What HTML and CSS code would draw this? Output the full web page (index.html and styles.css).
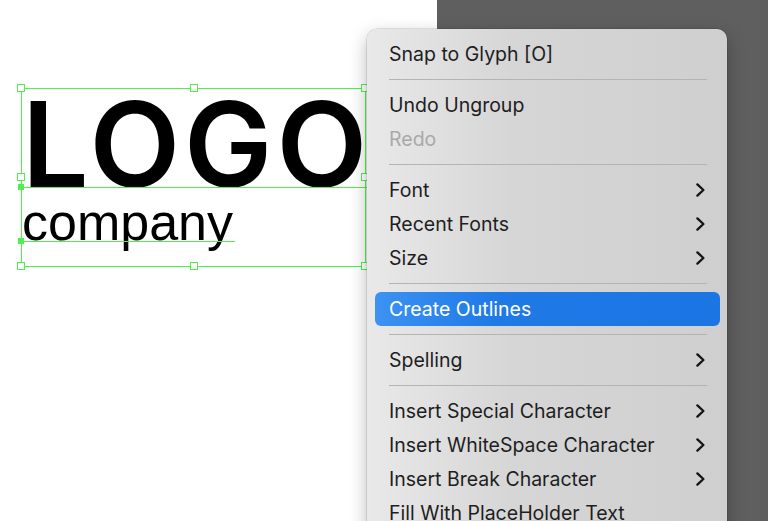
FILE: index.html
```html
<!DOCTYPE html>
<html lang="en">
<head>
<meta charset="utf-8">
<title>Context menu</title>
<link rel="stylesheet" href="styles.css">
</head>
<body>
<div class="app">
  <section class="artboard">
    <div class="logo-frame">
      <div class="logo-word">LOGO</div>
      <div class="company-word">company</div>
      <span class="guide guide-logo"></span>
      <span class="guide guide-company"></span>
      <span class="handle h-tl"></span>
      <span class="handle h-tm"></span>
      <span class="handle h-tr"></span>
      <span class="handle h-ml"></span>
      <span class="handle h-mr"></span>
      <span class="handle h-bl"></span>
      <span class="handle h-bm"></span>
      <span class="handle h-br"></span>
      <span class="dot d-logo"></span>
      <span class="dot d-company"></span>
    </div>
  </section>
  <section class="pasteboard"></section>
</div>

<nav class="menu">
  <div class="item">Snap to Glyph [O]</div>
  <div class="sep"></div>
  <div class="item">Undo Ungroup</div>
  <div class="item disabled">Redo</div>
  <div class="sep"></div>
  <div class="item">Font<svg class="chev" viewBox="0 0 9 14"><path d="M1.4 1.4 L7.4 7 L1.4 12.6"/></svg></div>
  <div class="item">Recent Fonts<svg class="chev" viewBox="0 0 9 14"><path d="M1.4 1.4 L7.4 7 L1.4 12.6"/></svg></div>
  <div class="item">Size<svg class="chev" viewBox="0 0 9 14"><path d="M1.4 1.4 L7.4 7 L1.4 12.6"/></svg></div>
  <div class="sep"></div>
  <div class="item active">Create Outlines</div>
  <div class="sep"></div>
  <div class="item">Spelling<svg class="chev" viewBox="0 0 9 14"><path d="M1.4 1.4 L7.4 7 L1.4 12.6"/></svg></div>
  <div class="sep"></div>
  <div class="item">Insert Special Character<svg class="chev" viewBox="0 0 9 14"><path d="M1.4 1.4 L7.4 7 L1.4 12.6"/></svg></div>
  <div class="item">Insert WhiteSpace Character<svg class="chev" viewBox="0 0 9 14"><path d="M1.4 1.4 L7.4 7 L1.4 12.6"/></svg></div>
  <div class="item">Insert Break Character<svg class="chev" viewBox="0 0 9 14"><path d="M1.4 1.4 L7.4 7 L1.4 12.6"/></svg></div>
  <div class="item">Fill With PlaceHolder Text</div>
</nav>
</body>
</html>
```

FILE: styles.css
```css
* { box-sizing: border-box; }
html, body {
  margin: 0;
  padding: 0;
  width: 768px;
  height: 521px;
  overflow: hidden;
  background: #5f5f5f;
}
.app {
  display: flex;
  width: 768px;
  height: 521px;
}
.artboard {
  width: 437px;
  height: 521px;
  background: #ffffff;
  padding: 88px 0 0 21px;
  flex: none;
}
.pasteboard {
  flex: 1;
  background: #5f5f5f;
}
.logo-frame {
  position: relative;
  width: 345px;
  height: 179px;
  border: 1px solid #4ef04e;
}
.logo-word {
  font-family: Inter, "Liberation Sans", sans-serif;
  font-weight: 600;
  font-size: 118px;
  line-height: 100px;
  padding-top: 5px;
  padding-left: 0px;
  color: #000;
  letter-spacing: 4px;
  white-space: nowrap;
}
.company-word {
  font-family: "Liberation Sans", Arial, sans-serif;
  font-size: 52px;
  line-height: 52px;
  margin-top: 2px;
  color: #000;
  white-space: nowrap;
}
.guide {
  position: absolute;
  left: -1px;
  height: 1px;
  background: #4ef04e;
}
.guide-logo { top: 98px; width: 346px; }
.guide-company { top: 152px; width: 214px; }
.handle {
  position: absolute;
  width: 8px;
  height: 8px;
  background: #fff;
  border: 1px solid #4ef04e;
}
.h-tl { left: -5px; top: -5px; }
.h-tm { left: 168px; top: -5px; }
.h-tr { left: 339px; top: -5px; }
.h-ml { left: -5px; top: 84px; }
.h-mr { left: 339px; top: 84px; }
.h-bl { left: -5px; top: 173px; }
.h-bm { left: 168px; top: 173px; }
.h-br { left: 339px; top: 173px; }
.dot {
  position: absolute;
  width: 6px;
  height: 6px;
  background: #4ef04e;
}
.d-logo { left: -4px; top: 95px; }
.d-company { left: -4px; top: 149px; }

.menu {
  position: absolute;
  left: 367px;
  top: 29px;
  width: 360px;
  height: 520px;
  padding-top: 8px;
  border-radius: 10px;
  background: linear-gradient(to right, #e9e9e9 0%, #d6d6d6 40%, #cfcfcf 100%);
  box-shadow: 0 0 0 0.5px rgba(0,0,0,0.18), 0 6px 18px rgba(0,0,0,0.28);
  font-family: Inter, "Noto Sans", sans-serif;
  font-size: 19.5px;
  color: #1e1e1e;
}
.item {
  display: flex;
  align-items: center;
  justify-content: space-between;
  height: 34px;
  margin: 0 7px 0 8px;
  padding: 0 15px 0 14px;
  border-radius: 6px;
  white-space: nowrap;
}
.item.disabled { color: #a9a9a9; }
.item.active {
  background: linear-gradient(to right, #3d92f2 0%, #1f7ae6 35%, #1b75e3 100%);
  color: #ffffff;
}
.chev {
  width: 9px;
  height: 14px;
  flex: none;
}
.chev path {
  fill: none;
  stroke: #141414;
  stroke-width: 2.3;
  stroke-linecap: round;
  stroke-linejoin: round;
}
.sep {
  height: 17px;
  display: flex;
  align-items: center;
  margin: 0 20px 0 22px;
}
.sep::before {
  content: "";
  display: block;
  width: 100%;
  height: 1px;
  background: #b4b4b4;
}
```
